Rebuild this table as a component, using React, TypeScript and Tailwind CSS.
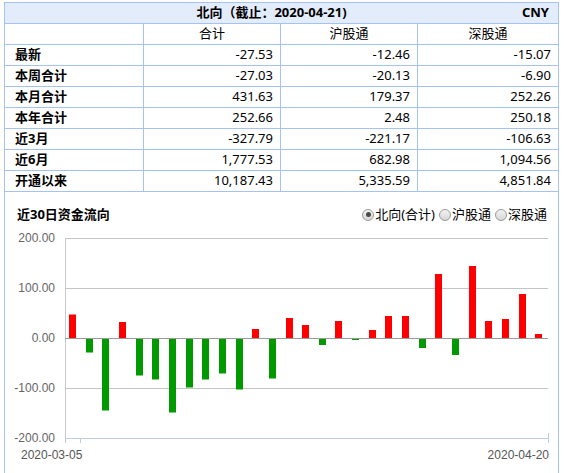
import React from "react";

const rows: [string, string, string, string][] = [
  ["最新", "-27.53", "-12.46", "-15.07"],
  ["本周合计", "-27.03", "-20.13", "-6.90"],
  ["本月合计", "431.63", "179.37", "252.26"],
  ["本年合计", "252.66", "2.48", "250.18"],
  ["近3月", "-327.79", "-221.17", "-106.63"],
  ["近6月", "1,777.53", "682.98", "1,094.56"],
  ["开通以来", "10,187.43", "5,335.59", "4,851.84"],
];

const values = [47, -29, -145, 32, -75, -83, -149, -99, -83, -71, -103, 18, -81, 40, 26, -14, 34, -4, 16, 44, 44, -20, 128, -34, 144, 34, 38, 88, 8];

function Radio({ checked, label }: { checked?: boolean; label: string }) {
  return (
    <div className="flex items-center ml-[4px]">
      <span className="w-[12px] h-[12px] rounded-full border border-[#9a9a9a] bg-gradient-to-b from-[#f4f4f4] to-[#d6d6d6] flex items-center justify-center mr-[1px]">
        {checked && <span className="w-[5px] h-[5px] rounded-full bg-[#4a4a4a]" />}
      </span>
      <span>{label}</span>
    </div>
  );
}

function Chart() {
  const y = (v: number) => 110 - v * 0.5;
  const step = 483 / 29;
  const ticks = [200, 100, 0, -100, -200];
  return (
    <svg width={553} height={245} className="block">
      {[10, 60, 160].map((gy) => (
        <line key={gy} x1={60} x2={543} y1={gy + 0.5} y2={gy + 0.5} stroke="#c4c4c4" strokeWidth={1} />
      ))}
      <line x1={60.5} x2={60.5} y1={10} y2={215} stroke="#c4c8d0" strokeWidth={1} />
      <line x1={60} x2={543} y1={210.5} y2={210.5} stroke="#c0cde0" strokeWidth={1} />
      <line x1={75.5} x2={75.5} y1={210} y2={215} stroke="#c0cde0" strokeWidth={1} />
      <line x1={543.5} x2={543.5} y1={205} y2={215} stroke="#c0cde0" strokeWidth={1} />
      {values.map((v, i) => {
        const x = Math.round(60 + i * step + 4);
        const top = v >= 0 ? y(v) : 110;
        const h = Math.abs(v) * 0.5;
        return <rect key={i} x={x} y={top} width={7} height={h} fill={v >= 0 ? "#ff0000" : "#009a00"} />;
      })}
      <line x1={60} x2={543} y1={110.5} y2={110.5} stroke="#9a9a9a" strokeWidth={1} />
      {ticks.map((t) => (
        <text key={t} x={50} y={y(t) + 4} textAnchor="end" fontSize={12} fill="#666" fontFamily="'Liberation Sans', Arial, sans-serif">
          {t.toFixed(2)}
        </text>
      ))}
      <text x={16} y={231} fontSize={12} fill="#555" fontFamily="'Liberation Sans', Arial, sans-serif">2020-03-05</text>
      <text x={544} y={231} textAnchor="end" fontSize={12} fill="#555" fontFamily="'Liberation Sans', Arial, sans-serif">2020-04-20</text>
    </svg>
  );
}

export default function App() {
  return (
    <div className="w-[564px] h-[473px] bg-white overflow-hidden text-[13px] text-black font-['Noto_Sans','Noto_Sans_CJK_SC',sans-serif]">
      <div className="ml-[4px] mt-[2px] w-[555px] h-[471px] border-l border-r border-t border-[#a4c2f4]">
        <div className="h-[21px] bg-[#e3ecfa] border-b border-[#a4c2f4] flex items-center font-bold relative">
          <div className="flex-1 text-center pr-[20px]">北向（截止：2020-04-21)</div>
          <div className="absolute right-[9px]">CNY</div>
        </div>
        <div className="flex h-[21px] border-b border-[#a4c2f4]">
          <div className="w-[139px] border-r border-[#a4c2f4]" />
          <div className="w-[137px] border-r border-[#a4c2f4] flex items-center justify-center">合计</div>
          <div className="w-[137px] border-r border-[#a4c2f4] flex items-center justify-center">沪股通</div>
          <div className="flex-1 flex items-center justify-center">深股通</div>
        </div>
        {rows.map((r) => (
          <div key={r[0]} className="flex h-[21px] border-b border-[#a4c2f4]">
            <div className="w-[139px] border-r border-[#a4c2f4] flex items-center pl-[10px] font-bold">{r[0]}</div>
            <div className="w-[137px] border-r border-[#a4c2f4] flex items-center justify-end pr-[7px]">{r[1]}</div>
            <div className="w-[137px] border-r border-[#a4c2f4] flex items-center justify-end pr-[7px]">{r[2]}</div>
            <div className="flex-1 flex items-center justify-end pr-[7px]">{r[3]}</div>
          </div>
        ))}
        <div className="h-[36px] pt-[9px] flex items-center justify-between pl-[12px] pr-[11px]">
          <div className="font-bold">近30日资金流向</div>
          <div className="flex items-center">
            <Radio checked label="北向(合计)" />
            <Radio label="沪股通" />
            <Radio label="深股通" />
          </div>
        </div>
        <Chart />
      </div>
    </div>
  );
}
